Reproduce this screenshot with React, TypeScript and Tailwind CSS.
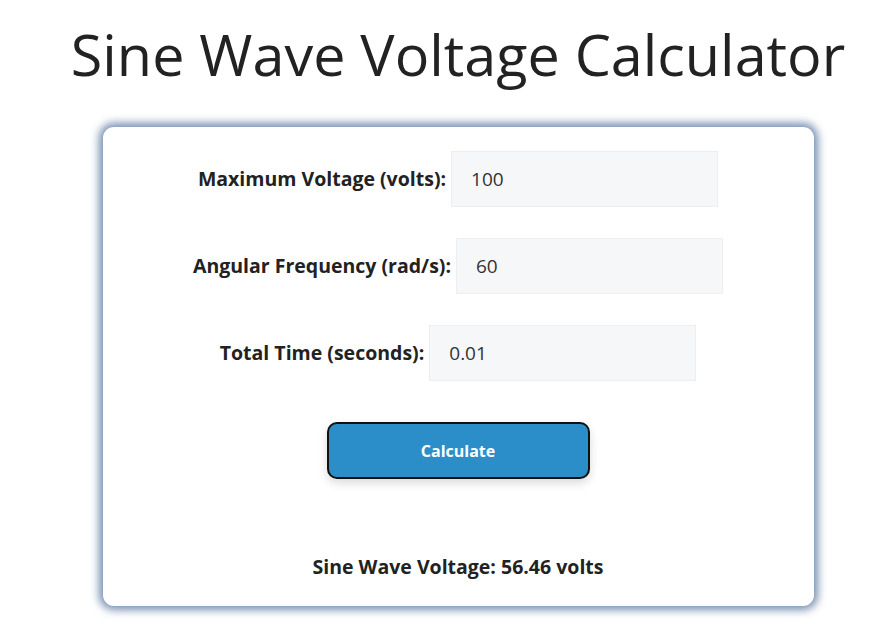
import { useState } from 'react'

const fields = [
  { id: 'vmax', label: 'Maximum Voltage (volts):' },
  { id: 'omega', label: 'Angular Frequency (rad/s):' },
  { id: 'time', label: 'Total Time (seconds):' },
]

export default function App() {
  const [values, setValues] = useState<Record<string, string>>({
    vmax: '100',
    omega: '60',
    time: '0.01',
  })
  const [result, setResult] = useState('56.46')

  const calculate = () => {
    const v = parseFloat(values.vmax) * Math.sin(parseFloat(values.omega) * parseFloat(values.time))
    setResult(isNaN(v) ? '—' : v.toFixed(2))
  }

  return (
    <div className="min-h-screen bg-white font-['Open_Sans',sans-serif] text-[#222]">
      <main className="ml-[29px] flex w-[858px] flex-col items-center">
        <h1 className="mt-[14px] text-[57.5px] leading-[80px] font-normal text-[#222]">Sine Wave Voltage Calculator</h1>
        <div className="mt-[33px] flex h-[479px] w-[711px] flex-col items-center rounded-[11px] bg-white pt-[24px] shadow-[0_0_8px_4px_rgba(95,125,165,0.85)]">
          {fields.map((f, i) => (
            <div key={f.id} className={`flex items-center gap-[5px] ${i > 0 ? 'mt-[31px]' : ''}`}>
              <label htmlFor={f.id} className="text-[19.5px] font-bold text-[#222]">
                {f.label}
              </label>
              <input
                id={f.id}
                value={values[f.id]}
                onChange={(e) => setValues({ ...values, [f.id]: e.target.value })}
                className="h-[56px] w-[267px] border border-[#eceef1] bg-[#f6f7f9] pl-[19px] text-[19px] text-[#333] outline-none"
              />
            </div>
          ))}
          <button
            onClick={calculate}
            className="mt-[41px] h-[57px] w-[263px] rounded-[10px] border-2 border-[#111] bg-[#2b8ec8] text-[16px] font-bold text-white shadow-[0_4px_10px_rgba(0,0,0,0.15)]"
          >
            Calculate
          </button>
          <p className="mt-[73px] text-[19.5px] font-bold text-[#222]">Sine Wave Voltage: {result} volts</p>
        </div>
      </main>
    </div>
  )
}
